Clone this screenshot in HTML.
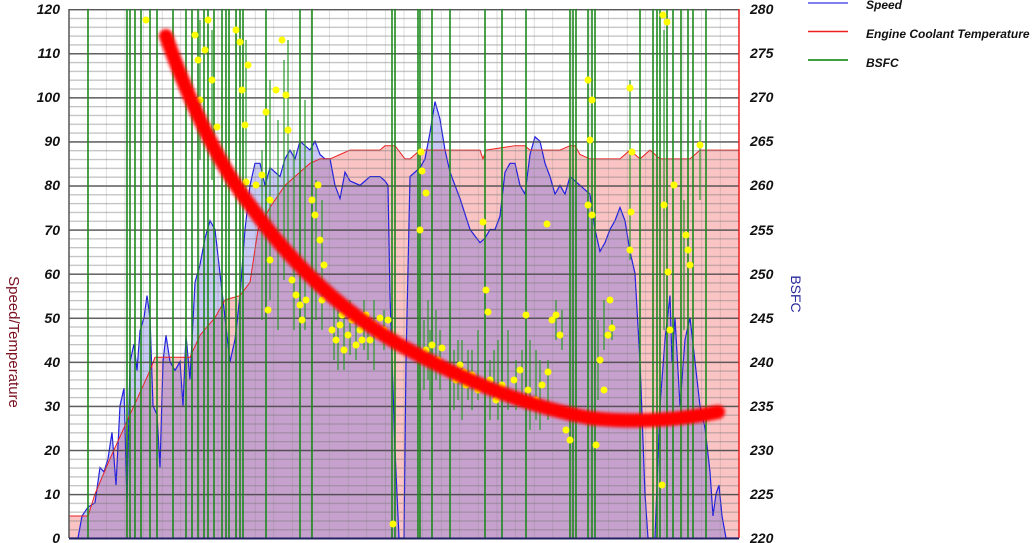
<!DOCTYPE html>
<html><head><meta charset="utf-8"><style>
html,body{margin:0;padding:0;background:#fff;width:1036px;height:543px;overflow:hidden}
svg{display:block}
text{font-family:"Liberation Sans",sans-serif}
.ax{font-size:14px;font-style:italic;font-weight:bold;fill:#111}
.lg{font-size:12px;font-style:italic;font-weight:bold;fill:#111}
</style></head><body>
<svg width="1036" height="543" viewBox="0 0 1036 543" xmlns="http://www.w3.org/2000/svg">
<defs>
<pattern id="hmin" x="0" y="9" width="20" height="8.816" patternUnits="userSpaceOnUse"><rect x="0" y="0" width="20" height="1.3" fill="rgba(120,120,120,0.45)"/></pattern>
<pattern id="hmaj" x="0" y="9" width="20" height="44.08" patternUnits="userSpaceOnUse"><rect x="0" y="0" width="20" height="1.4" fill="rgba(60,60,60,0.8)"/></pattern>
<pattern id="vg" x="69.5" y="0" width="18.6" height="20" patternUnits="userSpaceOnUse"><rect x="18" y="0" width="1" height="20" fill="rgba(120,120,120,0.4)"/></pattern>
<filter id="bl"><feGaussianBlur stdDeviation="1.6"/></filter>
<clipPath id="pc"><rect x="69" y="9" width="670" height="529"/></clipPath>
</defs>
<g clip-path="url(#pc)">
<g transform="translate(0,538) scale(1,-4.408)">
<polygon fill="#fbc4c4" points="69,0 69,5 88,5 95,10 110,18 130,28 150,38 155,41 190,41 200,46 215,50 225,54 240,55 250,58 258,70 270,75 285,80 300,83 310,85 320,86 330,86 340,87 350,88 380,88 385,89 395,89 405,86 410,86 420,88 480,88 483,86 486,88 515,89 525,89 530,88 560,88 570,89 575,89 580,87 590,86 620,86 630,88 640,86 650,88 660,86 690,86 700,88 739,88 739,0"/>
<polygon fill="rgba(90,90,225,0.33)" points="69,0 78,0 82,5 88,7 95,8 100,16 104,15 108,18 112,24 116,12 120,30 124,34 127,8 130,40 134,44 137,38 140,47 144,50 147,55 150,50 153,30 157,28 160,16 163,40 166,46 170,40 175,38 180,40 183,30 186,46 190,36 195,58 200,62 205,68 210,72 215,70 220,60 225,50 230,40 235,45 240,55 245,70 250,80 255,85 260,85 265,80 270,84 275,83 280,82 285,86 290,88 295,86 300,90 305,89 310,88 315,90 320,87 325,86 330,86 335,80 340,77 345,83 350,81 360,80 370,82 380,82 385,81 388,80 390,55 395,20 399,0 404,0 406,40 410,82 420,84 425,86 430,92 435,99 440,95 445,88 450,83 460,77 470,70 480,67 485,68 490,70 495,70 500,73 505,83 510,85 515,85 520,80 525,78 530,87 535,91 540,90 545,85 550,82 555,78 560,80 565,78 570,82 580,80 590,78 595,70 600,65 605,67 610,70 615,72 620,75 625,72 630,65 635,60 640,40 645,10 648,0 655,0 660,30 665,45 670,55 672,40 675,50 680,30 685,45 690,50 695,40 700,30 705,25 710,15 713,5 716,10 719,12 722,5 726,0 739,0"/>
<polyline fill="none" stroke="#2020e0" stroke-width="1.2" vector-effect="non-scaling-stroke" points="69,0 78,0 82,5 88,7 95,8 100,16 104,15 108,18 112,24 116,12 120,30 124,34 127,8 130,40 134,44 137,38 140,47 144,50 147,55 150,50 153,30 157,28 160,16 163,40 166,46 170,40 175,38 180,40 183,30 186,46 190,36 195,58 200,62 205,68 210,72 215,70 220,60 225,50 230,40 235,45 240,55 245,70 250,80 255,85 260,85 265,80 270,84 275,83 280,82 285,86 290,88 295,86 300,90 305,89 310,88 315,90 320,87 325,86 330,86 335,80 340,77 345,83 350,81 360,80 370,82 380,82 385,81 388,80 390,55 395,20 399,0 404,0 406,40 410,82 420,84 425,86 430,92 435,99 440,95 445,88 450,83 460,77 470,70 480,67 485,68 490,70 495,70 500,73 505,83 510,85 515,85 520,80 525,78 530,87 535,91 540,90 545,85 550,82 555,78 560,80 565,78 570,82 580,80 590,78 595,70 600,65 605,67 610,70 615,72 620,75 625,72 630,65 635,60 640,40 645,10 648,0 655,0 660,30 665,45 670,55 672,40 675,50 680,30 685,45 690,50 695,40 700,30 705,25 710,15 713,5 716,10 719,12 722,5 726,0 739,0"/>
<polyline fill="none" stroke="#ee2020" stroke-width="1" vector-effect="non-scaling-stroke" points="69,5 88,5 95,10 110,18 130,28 150,38 155,41 190,41 200,46 215,50 225,54 240,55 250,58 258,70 270,75 285,80 300,83 310,85 320,86 330,86 340,87 350,88 380,88 385,89 395,89 405,86 410,86 420,88 480,88 483,86 486,88 515,89 525,89 530,88 560,88 570,89 575,89 580,87 590,86 620,86 630,88 640,86 650,88 660,86 690,86 700,88 739,88"/>
</g>
<rect x="69" y="9" width="670" height="529" fill="url(#hmin)"/>
<rect x="69" y="9" width="670" height="529" fill="url(#hmaj)"/>
<rect x="69" y="9" width="670" height="529" fill="url(#vg)"/>
<g stroke="#1e8a1e" stroke-width="1.6">
<path d="M88 9V538M127 9V538M130 9V538M135 9V538M141 9V538M150 9V538M157 9V538M173 9V538M186 9V538M192 9V538M198 9V538M204 9V538M208 9V538M214 9V538M222 9V538M226 9V538M229 9V538M236 9V538M240 9V538M243 9V538M266 9V538M300 9V538M312 9V538M392 9V538M395 9V538M418 9V538M420 9V538M432 9V538M450 9V538M485 9V538M502 9V538M526 9V538M570 9V538M573 9V538M576 9V538M588 9V538M592 9V538M595 9V538M640 9V538M653 9V538M657 9V538M660 9V538M667 9V538M673 9V538M681 9V538M688 9V538M693 9V538M706 9V538"/>
</g>
<g stroke="#2a9a2a" stroke-width="1.4" opacity="0.85">
<path d="M200 20V160M212 30V180M246 40V200M262 150V320M270 80V300M278 120V330M284 60V280M288 40V250M294 150V330M305 100V330M316 180V320M322 200V330M334 300V360M338 310V370M344 300V370M350 300V355M356 310V360M364 300V350M368 320V360M374 300V370M384 310V350M424 320V390M428 300V380M430 330V400M436 310V380M440 330V390M454 350V410M458 340V400M462 340V420M468 350V400M472 350V410M478 330V400M490 360V420M494 350V400M498 340V420M508 330V410M516 360V410M522 350V400M530 340V430M536 350V420M540 360V430M548 360V420M556 300V340M562 310V350M598 320V400M604 300V350M612 320V340M630 80V260M664 30V330M684 200V330M700 120V200"/>
</g>
<g fill="#ffff00">
<circle cx="146" cy="20" r="3.5"/><circle cx="195" cy="35" r="3.5"/><circle cx="198" cy="60" r="3.5"/><circle cx="200" cy="100" r="3.5"/><circle cx="205" cy="50" r="3.5"/><circle cx="208" cy="20" r="3.5"/><circle cx="212" cy="80" r="3.5"/><circle cx="217" cy="127" r="3.5"/><circle cx="236" cy="30" r="3.5"/><circle cx="240" cy="42" r="3.5"/><circle cx="242" cy="90" r="3.5"/><circle cx="245" cy="125" r="3.5"/><circle cx="248" cy="65" r="3.5"/><circle cx="246" cy="182" r="3.5"/><circle cx="256" cy="185" r="3.5"/><circle cx="262" cy="175" r="3.5"/><circle cx="266" cy="112" r="3.5"/><circle cx="270" cy="200" r="3.5"/><circle cx="270" cy="260" r="3.5"/><circle cx="268" cy="310" r="3.5"/><circle cx="276" cy="90" r="3.5"/><circle cx="282" cy="40" r="3.5"/><circle cx="286" cy="95" r="3.5"/><circle cx="288" cy="130" r="3.5"/><circle cx="292" cy="280" r="3.5"/><circle cx="296" cy="295" r="3.5"/><circle cx="300" cy="305" r="3.5"/><circle cx="306" cy="300" r="3.5"/><circle cx="302" cy="320" r="3.5"/><circle cx="312" cy="200" r="3.5"/><circle cx="315" cy="215" r="3.5"/><circle cx="318" cy="185" r="3.5"/><circle cx="320" cy="240" r="3.5"/><circle cx="324" cy="265" r="3.5"/><circle cx="322" cy="300" r="3.5"/><circle cx="332" cy="330" r="3.5"/><circle cx="336" cy="340" r="3.5"/><circle cx="340" cy="325" r="3.5"/><circle cx="344" cy="350" r="3.5"/><circle cx="348" cy="335" r="3.5"/><circle cx="352" cy="320" r="3.5"/><circle cx="356" cy="345" r="3.5"/><circle cx="360" cy="330" r="3.5"/><circle cx="366" cy="315" r="3.5"/><circle cx="370" cy="340" r="3.5"/><circle cx="374" cy="325" r="3.5"/><circle cx="378" cy="335" r="3.5"/><circle cx="384" cy="330" r="3.5"/><circle cx="388" cy="320" r="3.5"/><circle cx="342" cy="315" r="3.5"/><circle cx="362" cy="340" r="3.5"/><circle cx="380" cy="318" r="3.5"/><circle cx="421" cy="152" r="3.5"/><circle cx="422" cy="171" r="3.5"/><circle cx="426" cy="193" r="3.5"/><circle cx="420" cy="230" r="3.5"/><circle cx="426" cy="350" r="3.5"/><circle cx="432" cy="345" r="3.5"/><circle cx="438" cy="360" r="3.5"/><circle cx="442" cy="348" r="3.5"/><circle cx="450" cy="370" r="3.5"/><circle cx="456" cy="380" r="3.5"/><circle cx="460" cy="365" r="3.5"/><circle cx="466" cy="385" r="3.5"/><circle cx="472" cy="375" r="3.5"/><circle cx="478" cy="390" r="3.5"/><circle cx="464" cy="372" r="3.5"/><circle cx="483" cy="222" r="3.5"/><circle cx="486" cy="290" r="3.5"/><circle cx="488" cy="312" r="3.5"/><circle cx="490" cy="380" r="3.5"/><circle cx="496" cy="400" r="3.5"/><circle cx="502" cy="385" r="3.5"/><circle cx="508" cy="395" r="3.5"/><circle cx="514" cy="380" r="3.5"/><circle cx="520" cy="370" r="3.5"/><circle cx="526" cy="315" r="3.5"/><circle cx="528" cy="390" r="3.5"/><circle cx="536" cy="400" r="3.5"/><circle cx="542" cy="385" r="3.5"/><circle cx="547" cy="224" r="3.5"/><circle cx="548" cy="372" r="3.5"/><circle cx="552" cy="320" r="3.5"/><circle cx="556" cy="315" r="3.5"/><circle cx="560" cy="335" r="3.5"/><circle cx="566" cy="430" r="3.5"/><circle cx="570" cy="440" r="3.5"/><circle cx="588" cy="80" r="3.5"/><circle cx="592" cy="100" r="3.5"/><circle cx="590" cy="140" r="3.5"/><circle cx="588" cy="205" r="3.5"/><circle cx="592" cy="215" r="3.5"/><circle cx="596" cy="445" r="3.5"/><circle cx="600" cy="360" r="3.5"/><circle cx="604" cy="390" r="3.5"/><circle cx="608" cy="335" r="3.5"/><circle cx="610" cy="300" r="3.5"/><circle cx="612" cy="328" r="3.5"/><circle cx="630" cy="88" r="3.5"/><circle cx="632" cy="152" r="3.5"/><circle cx="631" cy="212" r="3.5"/><circle cx="630" cy="250" r="3.5"/><circle cx="663" cy="15" r="3.5"/><circle cx="667" cy="22" r="3.5"/><circle cx="664" cy="205" r="3.5"/><circle cx="668" cy="272" r="3.5"/><circle cx="670" cy="330" r="3.5"/><circle cx="674" cy="185" r="3.5"/><circle cx="686" cy="235" r="3.5"/><circle cx="688" cy="250" r="3.5"/><circle cx="690" cy="265" r="3.5"/><circle cx="700" cy="145" r="3.5"/><circle cx="662" cy="485" r="3.5"/><circle cx="393" cy="524" r="3.5"/>
</g>
<path d="M166 36 C185 90, 215 160, 250 205 C290 262, 340 310, 400 345 C460 378, 520 405, 590 418 C640 424, 690 418, 718 412" fill="none" stroke="#ff0000" stroke-width="14" stroke-linecap="round" filter="url(#bl)"/>
</g>
<line x1="69" y1="9" x2="69" y2="538" stroke="#555" stroke-width="1.5"/>
<line x1="739" y1="9" x2="739" y2="538" stroke="#ee2020" stroke-width="1.5"/>
<line x1="69" y1="538.5" x2="739" y2="538.5" stroke="#202060" stroke-width="2"/>
<g class="ax" text-anchor="end">
<text x="60" y="14">120</text><text x="60" y="58">110</text><text x="60" y="102">100</text><text x="60" y="146">90</text><text x="60" y="190">80</text><text x="60" y="235">70</text><text x="60" y="279">60</text><text x="60" y="323">50</text><text x="60" y="367">40</text><text x="60" y="411">30</text><text x="60" y="455">20</text><text x="60" y="499">10</text><text x="60" y="543">0</text>
</g>
<g class="ax">
<text x="750" y="14">280</text><text x="750" y="58">275</text><text x="750" y="102">270</text><text x="750" y="146">265</text><text x="750" y="190">260</text><text x="750" y="235">255</text><text x="750" y="279">250</text><text x="750" y="323">245</text><text x="750" y="367">240</text><text x="750" y="411">235</text><text x="750" y="455">230</text><text x="750" y="499">225</text><text x="750" y="543">220</text>
</g>
<text x="0" y="0" transform="translate(9,342) rotate(90)" style="font-size:15px;fill:#7a1020" text-anchor="middle">Speed/Temperature</text>
<text x="0" y="0" transform="translate(791,294) rotate(90)" style="font-size:14px;fill:#2a2a9a" text-anchor="middle">BSFC</text>
<line x1="808" y1="3" x2="848" y2="3" stroke="#8080f0" stroke-width="2"/>
<line x1="808" y1="31.5" x2="848" y2="31.5" stroke="#ee2020" stroke-width="1.5"/>
<line x1="808" y1="60" x2="848" y2="60" stroke="#40a040" stroke-width="2"/>
<text class="lg" x="866" y="9">Speed</text>
<text class="lg" x="866" y="38">Engine Coolant Temperature</text>
<text class="lg" x="866" y="67">BSFC</text>
</svg>
</body></html>
